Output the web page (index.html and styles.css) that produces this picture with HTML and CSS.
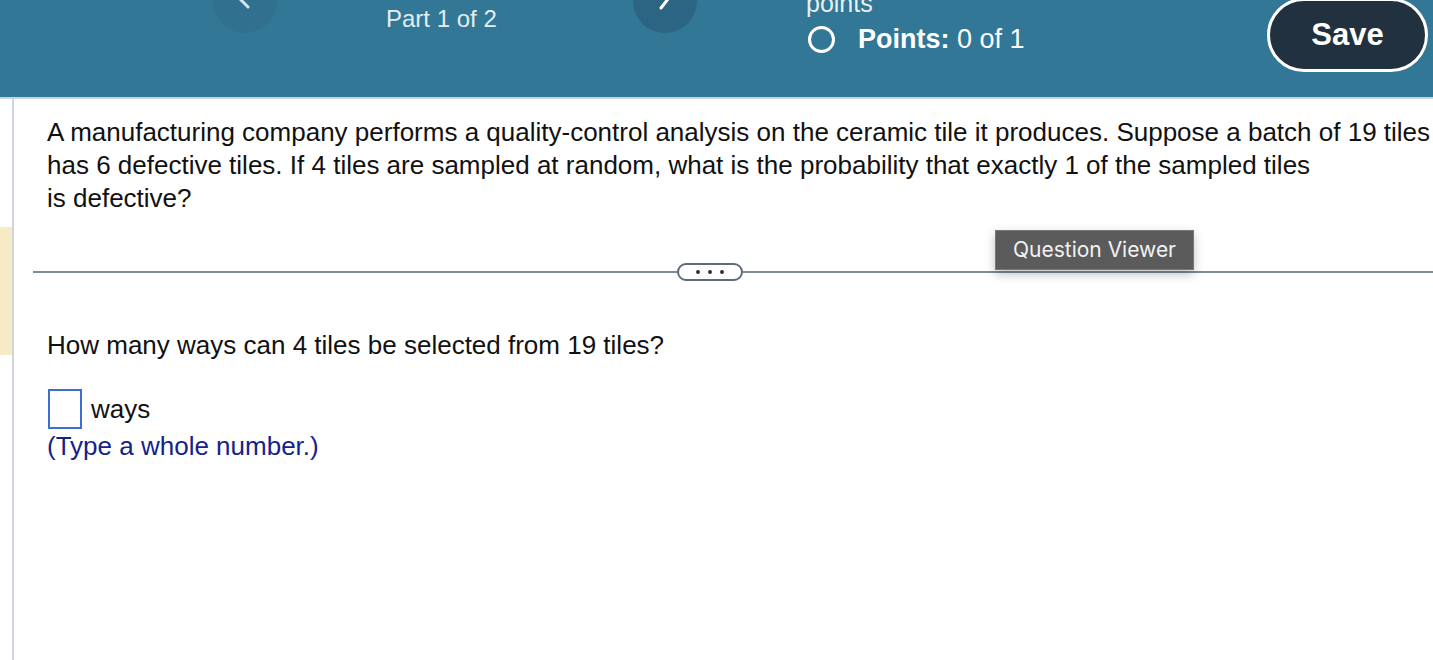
FILE: index.html
```html
<!DOCTYPE html>
<html>
<head>
<meta charset="utf-8">
<link rel="stylesheet" href="styles.css">
</head>
<body>
<header class="topbar">
  <div class="nav">
    <button class="navbtn prev" aria-label="Previous">
      <svg width="64" height="64" viewBox="0 0 64 64"><path d="M35 22 L27 30 L35 38" stroke="#d3e4ec" stroke-width="3" fill="none" stroke-linecap="round" stroke-linejoin="round"/></svg>
    </button>
    <div class="part">Part 1 of 2</div>
    <button class="navbtn next" aria-label="Next">
      <svg width="64" height="64" viewBox="0 0 64 64"><path d="M28 22 L35 30 L28 39" stroke="#ffffff" stroke-width="3" fill="none" stroke-linecap="round" stroke-linejoin="round"/></svg>
    </button>
  </div>
  <div class="score">
    <div class="cut">points</div>
    <div class="pts"><span class="ring"></span><b>Points:</b>&nbsp;0 of 1</div>
  </div>
  <button class="save">Save</button>
</header>
<main class="body">
  <aside class="rail"><div class="mark"></div></aside>
  <section class="content">
    <p class="question">A manufacturing company performs a quality-control analysis on the ceramic tile it produces. Suppose a batch of 19 tiles<br>has 6 defective tiles. If 4 tiles are sampled at random, what is the probability that exactly 1 of the sampled tiles<br>is defective?</p>
    <div class="divider">
      <span class="more"><i></i><i></i><i></i></span>
      <div class="tip">Question Viewer</div>
    </div>
    <p class="sub">How many ways can 4 tiles be selected from 19 tiles?</p>
    <div class="answer"><span class="box"></span><span>ways</span></div>
    <p class="hint">(Type a whole number.)</p>
  </section>
</main>
</body>
</html>
```
FILE: styles.css
```css
* { box-sizing: border-box; }
html, body { margin: 0; padding: 0; }
body {
  width: 1433px;
  height: 660px;
  overflow: hidden;
  background: #fff;
  font-family: "Liberation Sans", Arial, sans-serif;
  color: #111;
}
.topbar {
  height: 99px;
  background: #327795;
  border-bottom: 2px solid #c9d4de;
  display: flex;
  position: relative;
  overflow: hidden;
}
.nav {
  display: flex;
  align-items: flex-start;
  margin-left: 213px;
  width: 484px;
  flex: none;
}
.navbtn {
  width: 64px;
  height: 64px;
  border-radius: 50%;
  border: none;
  margin-top: -31px;
  padding: 0;
  flex: none;
  display: block;
}
.navbtn svg { display: block; }
.navbtn.prev { background: #31718f; }
.navbtn.next { background: #2b6583; }
.part {
  color: #e4edf2;
  font-size: 24px;
  line-height: 28px;
  margin-left: 109px;
  margin-top: 5px;
  width: 247px;
  flex: none;
}
.score {
  margin-left: 109px;
  color: #fff;
}
.cut {
  font-size: 25px;
  margin-top: -10px;
  line-height: 26px;
  color: #e9f0f4;
}
.pts {
  display: flex;
  align-items: center;
  font-size: 27px;
  line-height: 30px;
  margin-top: 8px;
  margin-left: 2px;
}
.ring {
  width: 27px;
  height: 27px;
  border: 3px solid #fff;
  border-radius: 50%;
  margin-right: 23px;
  flex: none;
}
.pts b { font-weight: 700; }
.save {
  position: absolute;
  left: 1267px;
  top: -2px;
  width: 161px;
  height: 74px;
  border-radius: 37px;
  background: #22313f;
  border: 3px solid #fff;
  color: #fff;
  font-family: "Liberation Sans", Arial, sans-serif;
  font-weight: 700;
  font-size: 31px;
  padding: 0;
}
.body {
  display: flex;
  height: 561px;
}
.rail {
  width: 14px;
  border-right: 2px solid #cfd4de;
  flex: none;
  padding-top: 128px;
}
.mark {
  height: 128px;
  background: #f7ebc6;
}
.content {
  flex: 1;
  padding-left: 33px;
}
.question {
  margin: 17px 0 0;
  font-size: 26px;
  line-height: 33px;
  color: #111;
  white-space: nowrap;
}
.divider {
  position: relative;
  margin: 56px 0 0 -14px;
  height: 2px;
  background: #7f8a99;
}
.more {
  position: absolute;
  left: 644px;
  top: -8px;
  width: 66px;
  height: 18px;
  background: #fff;
  border: 2px solid #5f6d7b;
  border-radius: 9px;
  display: flex;
  align-items: center;
  justify-content: center;
  gap: 8px;
}
.more i {
  width: 4px;
  height: 4px;
  border-radius: 50%;
  background: #333;
}
.tip {
  position: absolute;
  left: 962px;
  top: -41px;
  width: 199px;
  height: 40px;
  background: #5a5b5a;
  border: 1px solid #777;
  color: #f2f2f2;
  font-family: Inter, Roboto, "Noto Sans", sans-serif;
  font-size: 21px;
  line-height: 37px;
  text-align: center;
  box-shadow: 0 4px 10px rgba(0,0,0,0.25);
}
.sub {
  margin: 57px 0 0;
  font-size: 26px;
  line-height: 30px;
}
.answer {
  display: flex;
  align-items: center;
  margin-top: 29px;
  font-size: 26px;
}
.box {
  width: 34px;
  height: 40px;
  border: 2px solid #3b6fd1;
  margin-left: 1px;
  margin-right: 9px;
}
.hint {
  margin: 2px 0 0;
  font-size: 26px;
  line-height: 30px;
  color: #14238a;
}
```
